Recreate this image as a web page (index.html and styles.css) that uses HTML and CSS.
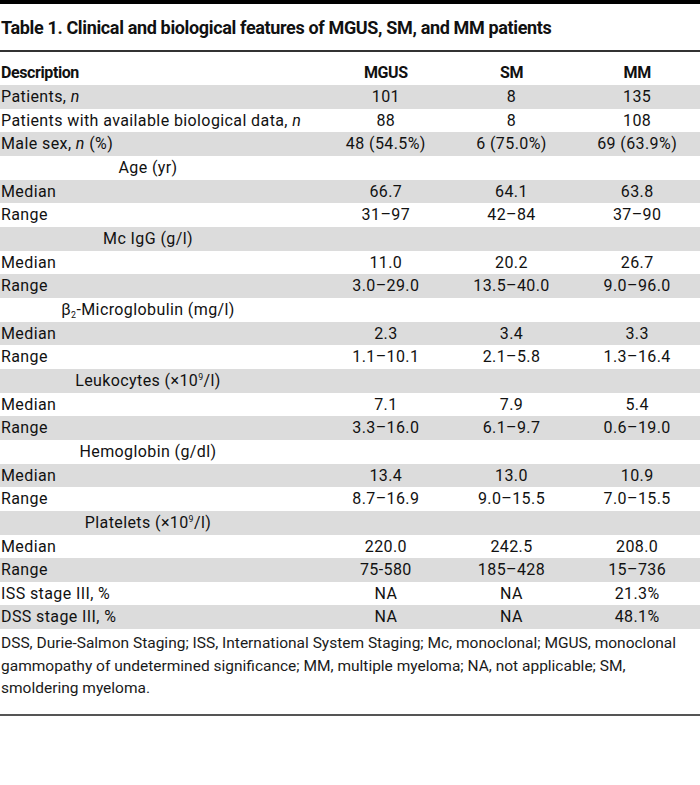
FILE: index.html
```html
<!DOCTYPE html>
<html lang="en">
<head>
<meta charset="utf-8">
<title>Table 1</title>
<link rel="stylesheet" href="styles.css">
</head>
<body>
<div class="topbar"></div>
<h1 class="title">Table 1. Clinical and biological features of MGUS, SM, and MM patients</h1>
<table class="data">
  <colgroup>
    <col class="c-desc"><col class="c-val"><col class="c-val"><col class="c-val">
  </colgroup>
  <thead>
    <tr><th class="lbl">Description</th><th>MGUS</th><th>SM</th><th>MM</th></tr>
  </thead>
  <tbody>
    <tr><td class="lbl">Patients, <i>n</i></td><td>101</td><td>8</td><td>135</td></tr>
    <tr><td class="lbl">Patients with available biological data, <i>n</i></td><td>88</td><td>8</td><td>108</td></tr>
    <tr><td class="lbl">Male sex, <i>n</i> (%)</td><td>48 (54.5%)</td><td>6 (75.0%)</td><td>69 (63.9%)</td></tr>
    <tr><td class="sec">Age (yr)</td><td></td><td></td><td></td></tr>
    <tr><td class="lbl">Median</td><td>66.7</td><td>64.1</td><td>63.8</td></tr>
    <tr><td class="lbl">Range</td><td>31–97</td><td>42–84</td><td>37–90</td></tr>
    <tr><td class="sec">Mc IgG (g/l)</td><td></td><td></td><td></td></tr>
    <tr><td class="lbl">Median</td><td>11.0</td><td>20.2</td><td>26.7</td></tr>
    <tr><td class="lbl">Range</td><td>3.0–29.0</td><td>13.5–40.0</td><td>9.0–96.0</td></tr>
    <tr><td class="sec">β<sub>2</sub>-Microglobulin (mg/l)</td><td></td><td></td><td></td></tr>
    <tr><td class="lbl">Median</td><td>2.3</td><td>3.4</td><td>3.3</td></tr>
    <tr><td class="lbl">Range</td><td>1.1–10.1</td><td>2.1–5.8</td><td>1.3–16.4</td></tr>
    <tr><td class="sec">Leukocytes (×10<sup>9</sup>/l)</td><td></td><td></td><td></td></tr>
    <tr><td class="lbl">Median</td><td>7.1</td><td>7.9</td><td>5.4</td></tr>
    <tr><td class="lbl">Range</td><td>3.3–16.0</td><td>6.1–9.7</td><td>0.6–19.0</td></tr>
    <tr><td class="sec">Hemoglobin (g/dl)</td><td></td><td></td><td></td></tr>
    <tr><td class="lbl">Median</td><td>13.4</td><td>13.0</td><td>10.9</td></tr>
    <tr><td class="lbl">Range</td><td>8.7–16.9</td><td>9.0–15.5</td><td>7.0–15.5</td></tr>
    <tr><td class="sec">Platelets (×10<sup>9</sup>/l)</td><td></td><td></td><td></td></tr>
    <tr><td class="lbl">Median</td><td>220.0</td><td>242.5</td><td>208.0</td></tr>
    <tr><td class="lbl">Range</td><td>75-580</td><td>185–428</td><td>15–736</td></tr>
    <tr><td class="lbl">ISS stage III, %</td><td>NA</td><td>NA</td><td>21.3%</td></tr>
    <tr><td class="lbl">DSS stage III, %</td><td>NA</td><td>NA</td><td>48.1%</td></tr>
  </tbody>
</table>
<p class="note">DSS, Durie-Salmon Staging; ISS, International System Staging; Mc, monoclonal; MGUS, monoclonal<br>gammopathy of undetermined significance; MM, multiple myeloma; NA, not applicable; SM,<br>smoldering myeloma.</p>
<div class="endrule"></div>
</body>
</html>
```

FILE: styles.css
```css
html, body {
  margin: 0;
  padding: 0;
  background: #fff;
}
body {
  width: 700px;
  font-family: Roboto, "Liberation Sans", sans-serif;
  color: #111;
}
.topbar {
  height: 4px;
  background: #000;
}
.title {
  margin: 12px 0 0 0;
  padding: 0 0 10px 1px;
  font-size: 18px;
  line-height: 24px;
  font-weight: 700;
  letter-spacing: -0.35px;
  border-bottom: 2px solid #333;
}
.data {
  width: 700px;
  border-collapse: collapse;
  table-layout: fixed;
  font-size: 16px;
  letter-spacing: 0.4px;
}
.c-desc { width: 323px; }
.data th, .data td {
  padding: 0;
  height: 23.65px;
  line-height: 23.65px;
  text-align: center;
  white-space: nowrap;
  font-weight: 400;
}
.data thead th {
  font-weight: 700;
  letter-spacing: -0.4px;
  padding-top: 9px;
  padding-bottom: 0.4px;
}
.data .lbl {
  text-align: left;
  padding-left: 1px;
}
.data .sec {
  text-align: center;
  padding-right: 27px;
}
.data tbody tr:nth-child(odd) {
  background: #dcdcdc;
}
.data sub, .data sup {
  font-size: 0.55em;
  line-height: 0;
}
.data sub { vertical-align: -0.3em; }
.data sup { vertical-align: 0.7em; }
.note {
  margin: 0;
  padding: 3px 0 0 1px;
  font-size: 15.5px;
  line-height: 22.5px;
  letter-spacing: 0;
  color: #1a1a1a;
}
.endrule {
  margin-top: 14px;
  height: 2px;
  background: #555;
}
```
